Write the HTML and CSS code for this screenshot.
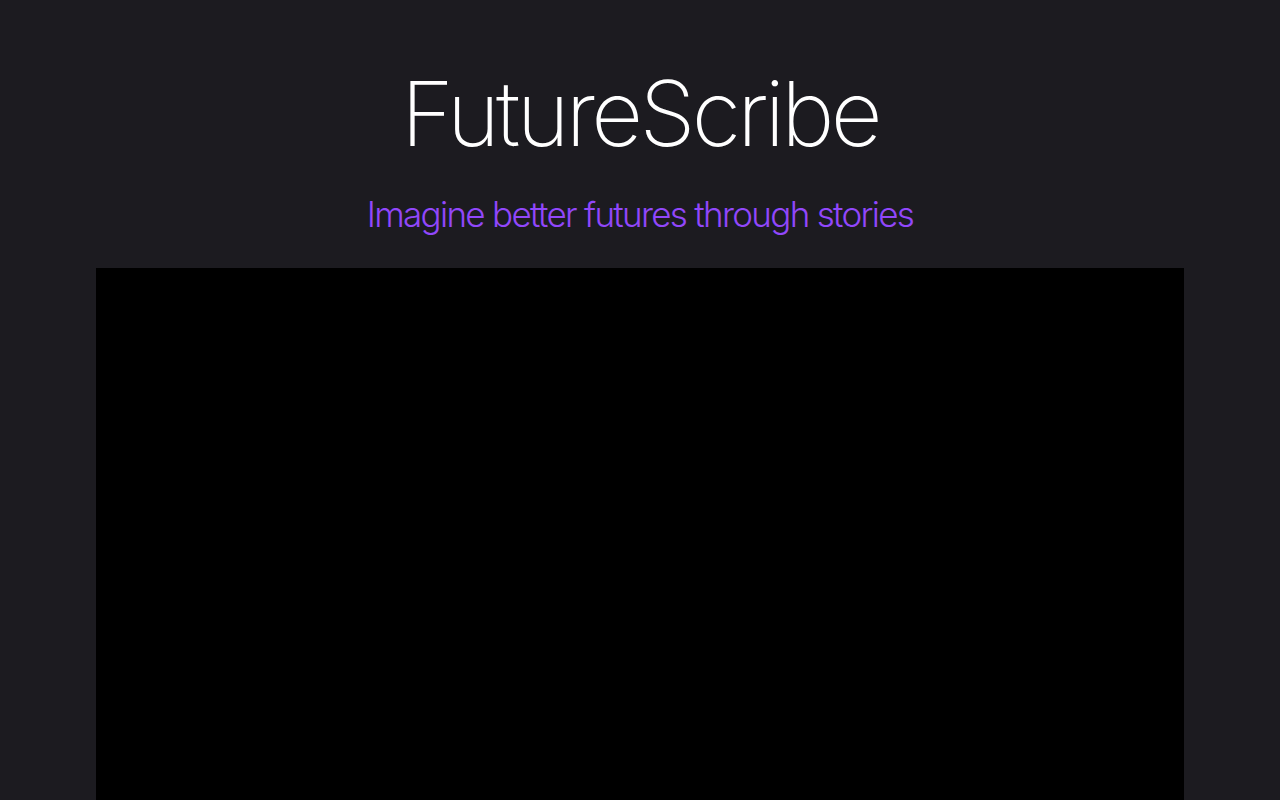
FILE: index.html
```html
<!DOCTYPE html>
<html lang="en">
<head>
<meta charset="utf-8">
<title>FutureScribe</title>
<link rel="stylesheet" href="styles.css">
</head>
<body>
<main class="page">
  <header class="hero">
    <h1 class="title">FutureScribe</h1>
    <p class="tagline">Imagine better futures through stories</p>
  </header>
  <section class="stage"></section>
</main>
</body>
</html>
```

FILE: styles.css
```css
html, body {
  margin: 0;
  padding: 0;
  background: #1c1b20;
  height: 100%;
  overflow: hidden;
}
.page {
  display: flex;
  flex-direction: column;
  align-items: stretch;
  padding: 0 96px;
  font-family: "Inter", "Liberation Sans", sans-serif;
}
.hero {
  display: flex;
  flex-direction: column;
  align-items: center;
  padding-top: 62px;
}
.title {
  margin: 0;
  font-size: 90px;
  font-weight: 200;
  letter-spacing: -3.7px;
  line-height: 104px;
  color: #ffffff;
}
.tagline {
  margin: 26px 0 0;
  font-size: 35px;
  font-weight: 300;
  letter-spacing: -1.7px;
  line-height: 44px;
  color: #9147fb;
}
.stage {
  margin-top: 32px;
  height: 532px;
  background: #000000;
}
```
